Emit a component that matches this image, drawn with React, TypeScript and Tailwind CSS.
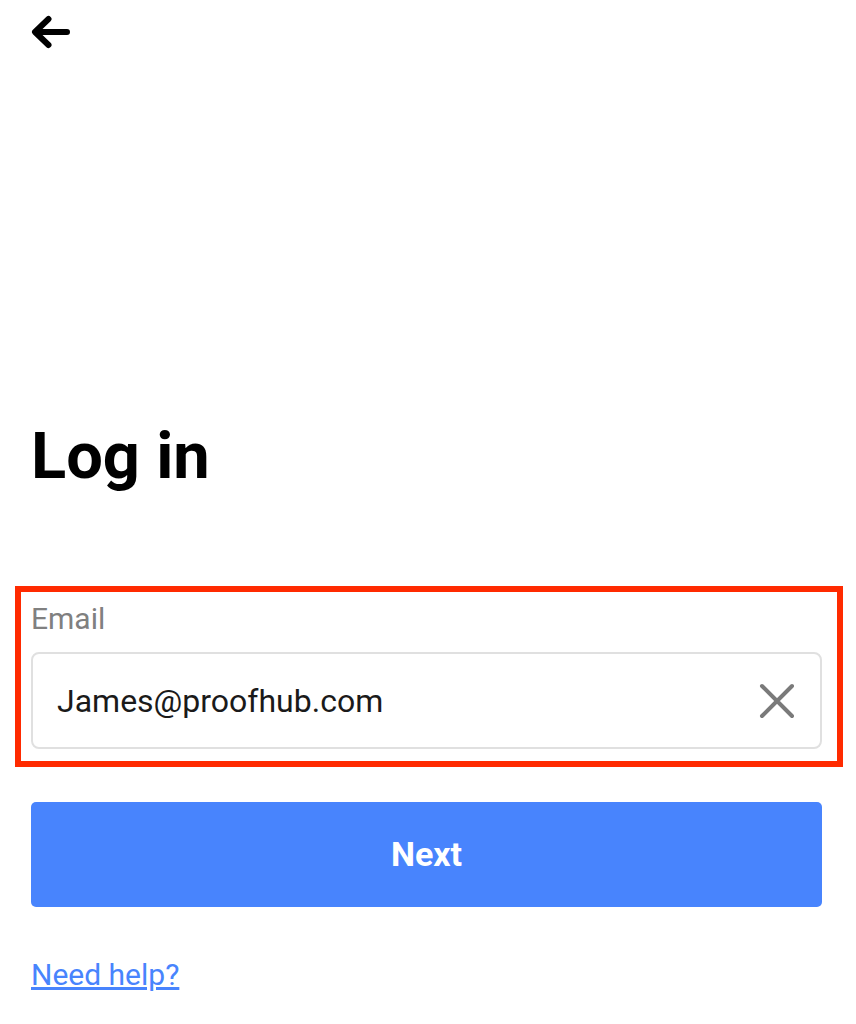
import { useState } from "react";

export default function App() {
  const [email, setEmail] = useState("James@proofhub.com");

  return (
    <div
      className="min-h-screen bg-white text-black"
      style={{ fontFamily: "Roboto, 'Liberation Sans', sans-serif" }}
    >
      <div className="pl-[31px] pr-[34px]">
        {/* Back */}
        <button type="button" aria-label="Go back" className="mt-[14px] block">
          <svg width="40" height="36" viewBox="0 0 40 36" fill="none" className="block">
            <path
              d="M36 18H5M17.5 5L4 18L17.5 31"
              stroke="#000"
              strokeWidth="6"
              strokeLinecap="round"
              strokeLinejoin="round"
            />
          </svg>
        </button>

        <h1 className="mt-[368px] text-[65px] font-bold leading-[76px]">
          Log in
        </h1>

        {/* Email field (highlighted) */}
        <div className="mt-[92px] ml-[-16px] mr-[-21px] border-[6px] border-[#ff2a00] pl-[10px] pr-[15px] pt-[10px] pb-[12px]">
          <label className="block text-[30px] leading-[34px] text-[#808080]">
            Email
          </label>
          <div className="mt-[16px] flex h-[97px] items-center rounded-lg border-2 border-[#e0e0e0] pl-[24px] pr-[25px]">
            <input
              value={email}
              onChange={(e) => setEmail(e.target.value)}
              className="min-w-0 flex-1 bg-transparent text-[32px] text-[#1a1a1a] outline-none"
            />
            <button
              type="button"
              aria-label="Clear"
              onClick={() => setEmail("")}
              className="shrink-0"
            >
              <svg width="36" height="36" viewBox="0 0 36 36" className="block">
                <path
                  d="M3 3L33 33M33 3L3 33"
                  stroke="#7a7a7a"
                  strokeWidth="4"
                  strokeLinecap="round"
                />
              </svg>
            </button>
          </div>
        </div>

        <button
          type="button"
          className="mt-[35px] flex h-[105px] w-full items-center justify-center rounded-[5px] bg-[#4884fd] text-[34px] font-bold text-white"
        >
          Next
        </button>

        <a
          href="#"
          className="mt-[48px] inline-block text-[30px] leading-[40px] text-[#4884fd] underline"
        >
          Need help?
        </a>
      </div>
    </div>
  );
}
